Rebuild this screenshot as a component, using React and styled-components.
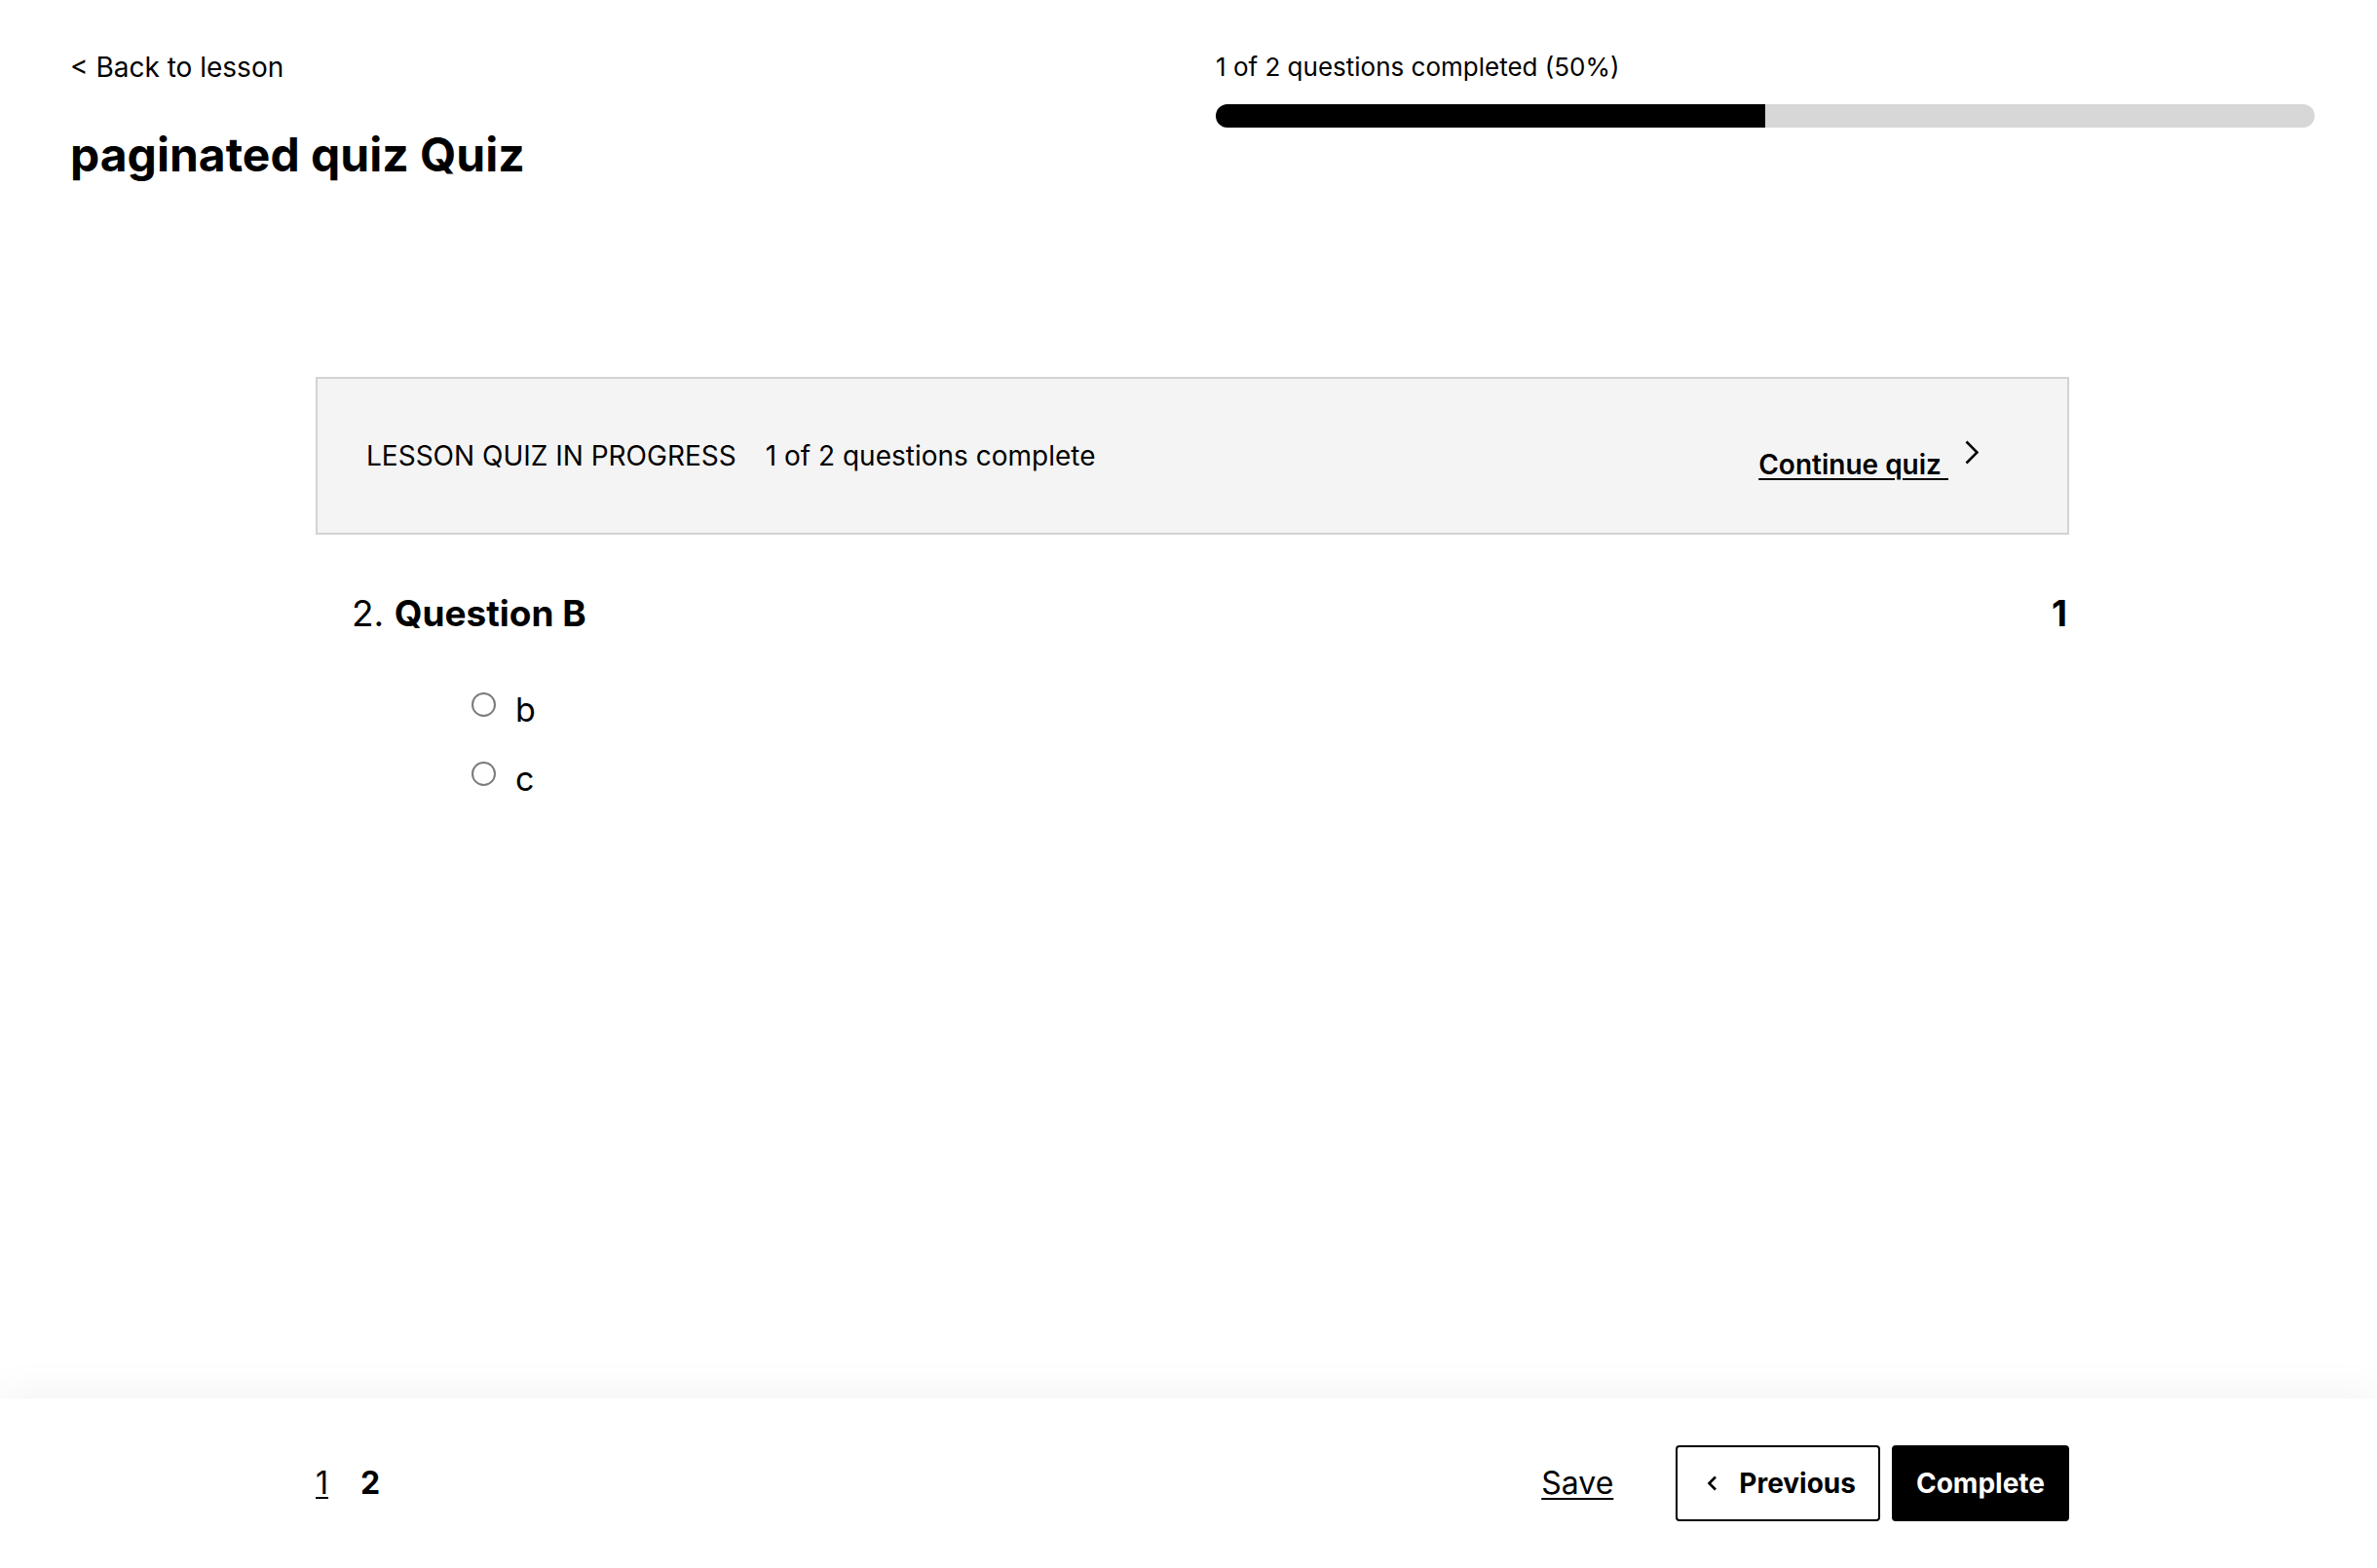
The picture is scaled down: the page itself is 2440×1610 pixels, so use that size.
import React from 'react';
import styled, { createGlobalStyle } from 'styled-components';

const GlobalStyle = createGlobalStyle`
  html, body {
    margin: 0;
    padding: 0;
    background: #fff;
  }
  body {
    font-family: Inter, "Noto Sans", "Liberation Sans", sans-serif;
    color: #000;
  }
`;

const options = ['b', 'c'];
const completed = 1;
const total = 2;

const App = () => {
  const percent = Math.round((completed / total) * 100);

  return (
    <Page>
      <GlobalStyle />
      <Header>
        <div>
          <BackLink href="#">&lt; Back to lesson</BackLink>
          <Title>paginated quiz Quiz</Title>
        </div>
        <div>
          <ProgressLabel>
            {completed} of {total} questions completed ({percent}%)
          </ProgressLabel>
          <Track>
            <Fill style={{ width: `${percent}%` }} />
          </Track>
        </div>
      </Header>

      <Main>
        <Content>
          <Banner>
            <BannerText>
              <span>LESSON QUIZ IN PROGRESS</span>
              <span>
                {completed} of {total} questions complete
              </span>
            </BannerText>
            <ContinueLink href="#">
              <ContinueText>Continue quiz&nbsp;</ContinueText>
              <Chevron width="14" height="25" viewBox="0 0 14 25">
                <polyline points="1.5,1.5 12.5,12.5 1.5,23.5" />
              </Chevron>
            </ContinueLink>
          </Banner>

          <QuestionRow>
            <QuestionTitle>
              2. <strong>Question B</strong>
            </QuestionTitle>
            <Points>1</Points>
          </QuestionRow>

          <OptionList>
            {options.map(opt => (
              <OptionRow key={opt}>
                <Radio type="radio" name="question-b" value={opt} />
                <span>{opt}</span>
              </OptionRow>
            ))}
          </OptionList>
        </Content>
      </Main>

      <Footer>
        <FooterInner>
          <Pages>
            <PageLink href="#">1</PageLink>
            <CurrentPage>2</CurrentPage>
          </Pages>
          <Actions>
            <SaveLink href="#">Save</SaveLink>
            <Button>
              <SmallChevron width="24" height="16" viewBox="0 0 24 16">
                <polyline points="16,1.5 9.5,8 16,14.5" />
              </SmallChevron>
              Previous
            </Button>
            <Button primary>Complete</Button>
          </Actions>
        </FooterInner>
      </Footer>
    </Page>
  );
};

export default App;

const Page = styled.div`
  min-height: 100vh;
  display: flex;
  flex-direction: column;
`;

const Header = styled.header`
  display: grid;
  grid-template-columns: 1fr 1128px;
  padding: 53px 64px 0 72px;
`;

const BackLink = styled.a`
  display: block;
  font-size: 28px;
  line-height: 32px;
  color: #000;
  text-decoration: none;
`;

const Title = styled.h1`
  margin: 46px 0 0;
  font-size: 48px;
  line-height: 56px;
  font-weight: 700;
`;

const ProgressLabel = styled.div`
  font-size: 26px;
  line-height: 32px;
`;

const Track = styled.div`
  margin-top: 22px;
  height: 24px;
  border-radius: 12px;
  background: #d7d7d7;
  overflow: hidden;
`;

const Fill = styled.div`
  height: 100%;
  background: #000;
`;

const Main = styled.main`
  flex: 1;
  padding: 200px 0 60px 8px;
`;

const Content = styled.div`
  width: 1800px;
  margin: 0 auto;
`;

const Banner = styled.section`
  box-sizing: border-box;
  height: 162px;
  display: flex;
  align-items: center;
  justify-content: space-between;
  padding: 0 91px 0 50px;
  background: #f4f4f4;
  border: 2px solid #d3d3d3;
`;

const BannerText = styled.div`
  display: flex;
  gap: 30px;
  font-size: 28px;
  line-height: 32px;
`;

const ContinueLink = styled.a`
  display: flex;
  align-items: flex-start;
  padding-top: 8px;
  color: #000;
  text-decoration: none;
`;

const ContinueText = styled.span`
  padding-top: 9px;
  font-size: 28px;
  line-height: 32px;
  font-weight: 600;
  text-decoration: underline;
  text-decoration-thickness: 2px;
  text-underline-offset: 4px;
`;

const Chevron = styled.svg`
  margin-left: 17px;
  fill: none;
  stroke: #000;
  stroke-width: 2.6;
`;

const QuestionRow = styled.div`
  display: flex;
  justify-content: space-between;
  align-items: baseline;
  margin-top: 59px;
  padding-left: 37px;
`;

const QuestionTitle = styled.h2`
  margin: 0;
  font-size: 37px;
  line-height: 44px;
  font-weight: 400;

  strong {
    font-weight: 700;
  }
`;

const Points = styled.span`
  font-size: 37px;
  line-height: 44px;
  font-weight: 700;
  margin-right: 2px;
`;

const OptionList = styled.div`
  display: flex;
  flex-direction: column;
  gap: 23px;
  margin-top: 53px;
  padding-left: 160px;
`;

const OptionRow = styled.label`
  display: flex;
  align-items: flex-start;
  gap: 20px;
  font-size: 34px;
  line-height: 48px;
`;

const Radio = styled.input`
  appearance: none;
  box-sizing: border-box;
  width: 25px;
  height: 25px;
  margin: 6px 0 0;
  border: 2px solid #7b7b7b;
  border-radius: 50%;
  background: #fff;
`;

const Footer = styled.footer`
  height: 174px;
  display: flex;
  align-items: center;
  padding-left: 8px;
  background: #fff;
  box-shadow: 0 -6px 40px rgba(0, 0, 0, 0.05);
`;

const FooterInner = styled.div`
  width: 1800px;
  margin: 0 auto;
  display: flex;
  align-items: center;
  justify-content: space-between;
`;

const Pages = styled.nav`
  display: flex;
  gap: 33px;
  font-size: 32px;
  line-height: 40px;
`;

const PageLink = styled.a`
  color: #000;
  text-decoration: underline;
  text-decoration-thickness: 2px;
  text-underline-offset: 3px;
`;

const CurrentPage = styled.span`
  font-weight: 700;
`;

const Actions = styled.div`
  display: flex;
  align-items: center;
  gap: 12px;
`;

const SaveLink = styled.a`
  margin-right: 52px;
  font-size: 32px;
  line-height: 40px;
  color: #000;
  text-decoration: underline;
  text-decoration-thickness: 2px;
  text-underline-offset: 4px;
`;

const Button = styled.button`
  box-sizing: border-box;
  height: 78px;
  display: inline-flex;
  align-items: center;
  gap: 16px;
  padding: 0 23px;
  border: 2px solid #000;
  border-radius: 4px;
  background: ${props => (props.primary ? '#000' : '#fff')};
  color: ${props => (props.primary ? '#fff' : '#000')};
  font-family: inherit;
  font-size: 28px;
  font-weight: 700;
`;

const SmallChevron = styled.svg`
  fill: none;
  stroke: currentColor;
  stroke-width: 2.6;
`;
